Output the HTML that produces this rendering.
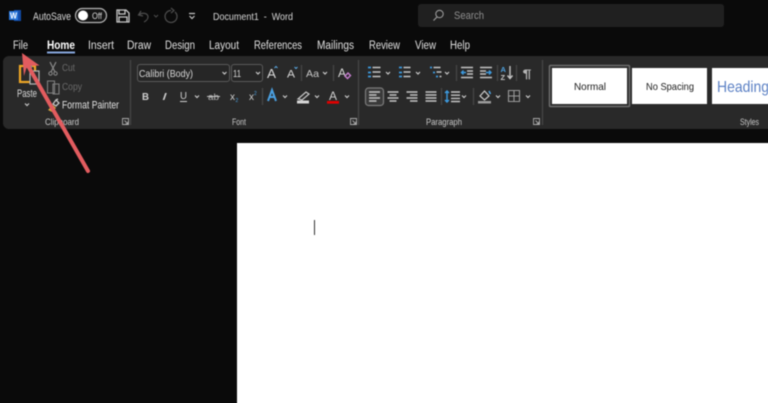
<!DOCTYPE html>
<html><head><meta charset="utf-8"><style>
html,body{margin:0;padding:0;background:#0a0a0a;width:768px;height:403px;overflow:hidden;position:relative}
svg{display:block;position:absolute;left:-8px;top:-8px;filter:blur(.5px)}
text{font-family:"Liberation Sans",sans-serif;font-size:11px;fill:#d8d8d8}
.c{fill:none;stroke:#c8c8c8;stroke-width:1.2}
.l{fill:none;stroke:#c4c4c4;stroke-width:1.4}
.b{fill:none;stroke:#3d9be0;stroke-width:1.8}
.s{stroke:#474747;stroke-width:1.2}
.t{font-size:11.5px;fill:#e0e0e0}
.g{font-size:9.5px;fill:#c8c8c8}
</style></head><body>
<svg width="784" height="419" viewBox="-8 -8 784 419" xmlns="http://www.w3.org/2000/svg">
<rect x="-8" y="-8" width="784" height="419" fill="#0a0a0a"/>
<!-- title bar -->
<rect x="14" y="10" width="7" height="11" fill="#124ba8"/>
<rect x="9" y="11" width="9" height="9" fill="#2a78dc"/>
<text x="10" y="18.500" textLength="7" lengthAdjust="spacingAndGlyphs" style="font-size:8px;font-weight:bold;fill:#fff">W</text>
<text x="33" y="20" textLength="38" lengthAdjust="spacingAndGlyphs">AutoSave</text>
<rect x="75.500" y="8.500" width="31" height="14" rx="7" fill="#141414" stroke="#b5b5b5" stroke-width="1.200"/>
<circle cx="83" cy="15.500" r="5" fill="#fff"/>
<text x="92" y="19" textLength="10" lengthAdjust="spacingAndGlyphs" style="font-size:9.500px">Off</text>
<path d="M117 10h9l3 3v9h-12zM119 10v4h6v-4M119 22v-5h8v5" fill="none" stroke="#c8c8c8" stroke-width="1.300"/>
<path d="M141 11l-2.500 4 4.500 1M139 15c3-3 9-2 9 2 0 2-2 4-4 5" fill="none" stroke="#4d4d4d" stroke-width="1.200"/>
<path d="M154 15l2 2 2-2" fill="none" stroke="#4d4d4d"/>
<path d="M175 12a6 6 0 1 1-4-1.500M171 8l3 2.500-3 2.500" fill="none" stroke="#4d4d4d" stroke-width="1.200"/>
<path d="M189 13.500h6M189.500 16l2.500 2.500 2.500-2.500" fill="none" stroke="#c2c2c2" stroke-width="1.200"/>
<text x="213" y="20" textLength="80" lengthAdjust="spacingAndGlyphs" xml:space="preserve" style="font-size:10.500px">Document1  -  Word</text>
<rect x="418" y="4" width="306" height="23" rx="3" fill="#202020"/>
<circle cx="439.500" cy="14" r="3.700" fill="none" stroke="#9a9a9a" stroke-width="1.100"/>
<path d="M437 17l-3.500 3.500" stroke="#9a9a9a" stroke-width="1.200"/>
<text x="454" y="19" textLength="30" lengthAdjust="spacingAndGlyphs" style="fill:#8f8f8f;font-size:11px">Search</text>
<!-- tabs -->
<text class="t" x="13" y="49" textLength="15" lengthAdjust="spacingAndGlyphs">File</text>
<text class="t" x="47" y="49" textLength="28" lengthAdjust="spacingAndGlyphs" style="fill:#fff;font-weight:bold">Home</text>
<rect x="47" y="51.500" width="28" height="2" fill="#86a6dc"/>
<text class="t" x="88" y="49" textLength="26" lengthAdjust="spacingAndGlyphs">Insert</text>
<text class="t" x="127" y="49" textLength="24" lengthAdjust="spacingAndGlyphs">Draw</text>
<text class="t" x="165" y="49" textLength="30" lengthAdjust="spacingAndGlyphs">Design</text>
<text class="t" x="209" y="49" textLength="30" lengthAdjust="spacingAndGlyphs">Layout</text>
<text class="t" x="254" y="49" textLength="48" lengthAdjust="spacingAndGlyphs">References</text>
<text class="t" x="317" y="49" textLength="37" lengthAdjust="spacingAndGlyphs">Mailings</text>
<text class="t" x="369" y="49" textLength="31" lengthAdjust="spacingAndGlyphs">Review</text>
<text class="t" x="415" y="49" textLength="21" lengthAdjust="spacingAndGlyphs">View</text>
<text class="t" x="450" y="49" textLength="20" lengthAdjust="spacingAndGlyphs">Help</text>
<!-- ribbon -->
<rect x="3" y="56" width="790" height="73" rx="6" fill="#292929"/>
<path d="M130.500 60v65M358.500 60v65M542.500 60v65" class="s"/>
<!-- clipboard -->
<rect x="20" y="66" width="15" height="16" fill="none" stroke="#eda626" stroke-width="2.200"/>
<rect x="25" y="64" width="7" height="4" fill="#8d8d8d"/>
<path d="M30 71h9v13h-9z" fill="#2a2a2a" stroke="#b5b5b5" stroke-width="1.200"/>
<text x="17" y="97" textLength="20" lengthAdjust="spacingAndGlyphs" style="font-size:11px">Paste</text>
<path d="M25 103.500l2 2 2-2" class="c"/>
<path d="M50 62l5 10M56 62l-5 10" fill="none" stroke="#8a8a8a" stroke-width="1.200"/>
<circle cx="50.500" cy="73.500" r="1.700" fill="none" stroke="#8a8a8a"/><circle cx="55.500" cy="73.500" r="1.700" fill="none" stroke="#8a8a8a"/>
<text x="62" y="71" textLength="13" lengthAdjust="spacingAndGlyphs" style="fill:#6a6a6a;font-size:10.500px">Cut</text>
<path d="M47.500 81h7v12h-7zM53 84h6v10h-6z" fill="#2a2a2a" stroke="#7f7f7f" stroke-width="1.100"/>
<text x="62" y="90" textLength="20" lengthAdjust="spacingAndGlyphs" style="fill:#6a6a6a;font-size:10.500px">Copy</text>
<path d="M48 110l5-5 3 3-4 4z" fill="#d9a53a"/><path d="M53 104l3-4 3 3-3 3zM56 100l2-1" fill="none" stroke="#c4c4c4" stroke-width="1.300"/>
<text x="62" y="108.500" textLength="57" lengthAdjust="spacingAndGlyphs" style="fill:#e0e0e0;font-size:11px">Format Painter</text>
<text class="g" x="45" y="125" textLength="34" lengthAdjust="spacingAndGlyphs">Clipboard</text>
<path d="M122.500 118.500h6v6h-6zM124.500 120.500l3.500 3.500M128 121.500v2.500h-2.500" fill="none" stroke="#a8a8a8" stroke-width=".9"/>
<!-- font -->
<rect x="137.500" y="64.500" width="92" height="17" rx="2.500" fill="#262626" stroke="#5a5a5a"/>
<rect x="231.500" y="64.500" width="31" height="17" rx="2.500" fill="#262626" stroke="#5a5a5a"/>
<text x="139" y="77" textLength="54" lengthAdjust="spacingAndGlyphs" style="font-size:10.500px">Calibri (Body)</text>
<text x="233" y="77" textLength="8" lengthAdjust="spacingAndGlyphs" style="font-size:10.500px">11</text>
<path d="M222.500 72l2 2 2-2M256 72l2 2 2-2M323 72l2 2 2-2" class="c"/>
<text x="267" y="78" textLength="9" lengthAdjust="spacingAndGlyphs" style="font-size:13px">A</text>
<path d="M274.500 68l1.500-1.500 1.500 1.500M294.500 67l1.500 1.500 1.500-1.500" fill="none" stroke="#5aa7e0"/>
<text x="287" y="77.500" textLength="8" lengthAdjust="spacingAndGlyphs" style="font-size:11px">A</text>
<path d="M301.500 65v16" class="s"/>
<text x="306" y="77" textLength="13" lengthAdjust="spacingAndGlyphs" style="font-size:10.500px;fill:#c8c8c8">Aa</text>
<path d="M333.500 65v16" class="s"/>
<text x="338" y="77" textLength="8" lengthAdjust="spacingAndGlyphs" style="font-size:12px">A</text>
<path d="M345 76l3-3 2.500 2.500-3 3z" fill="none" stroke="#c77fd0" stroke-width="1.400"/>
<text x="142" y="100" textLength="7" lengthAdjust="spacingAndGlyphs" style="font-weight:bold;font-size:10.500px;fill:#cfcfcf">B</text>
<text x="162" y="100" textLength="5" lengthAdjust="spacingAndGlyphs" style="font-style:italic;font-size:10.500px;fill:#cfcfcf">I</text>
<text x="180" y="99" textLength="7" lengthAdjust="spacingAndGlyphs" style="font-size:10.500px;fill:#cfcfcf">U</text>
<path d="M180 101.500h7" stroke="#cfcfcf"/>
<path d="M195 95.500l2 2 2-2M283 95.500l2 2 2-2M315 95.500l2 2 2-2M345 95.500l2 2 2-2" class="c"/>
<text x="208" y="100" textLength="11" lengthAdjust="spacingAndGlyphs" style="font-size:9px;fill:#b5b5b5">ab</text>
<path d="M207 96.500h13" stroke="#c4c4c4"/>
<text x="230" y="100" textLength="5" lengthAdjust="spacingAndGlyphs" style="font-size:10.500px;fill:#cfcfcf">x</text>
<text x="235.500" y="102" style="font-size:5px;fill:#4fa2e0">2</text>
<text x="249" y="100" textLength="5" lengthAdjust="spacingAndGlyphs" style="font-size:10.500px;fill:#cfcfcf">x</text>
<text x="254" y="95" style="font-size:5px;fill:#4fa2e0">2</text>
<path d="M262.500 88v17" class="s"/>
<path d="M268 101l4-11 4 11M270 97h4" fill="none" stroke="#4a9fe0" stroke-width="2"/>
<path d="M298 99l8-7 3 2-7 6z" fill="none" stroke="#c8c8c8" stroke-width="1.200"/>
<rect x="297" y="100.500" width="12" height="3" fill="#d5d5d5"/>
<text x="329" y="100" textLength="8" lengthAdjust="spacingAndGlyphs" style="font-size:11.500px;fill:#cfcfcf">A</text>
<rect x="327" y="101" width="12" height="2.700" fill="#e00000"/>
<text class="g" x="232" y="125" textLength="14" lengthAdjust="spacingAndGlyphs">Font</text>
<path d="M350.500 118.500h6v6h-6zM352.500 120.500l3.500 3.500M356 121.500v2.500h-2.500" fill="none" stroke="#a8a8a8" stroke-width=".9"/>
<!-- paragraph row 1 -->
<path d="M368 67.500h3M368 72.500h3M368 76.500h3" class="b"/>
<path d="M372.500 67.500h8M372.500 72h8M372.500 76.500h8" class="l"/>
<path d="M386 72l2 2 2-2M416 72l2 2 2-2M445 72l2 2 2-2" class="c"/>
<path d="M399 67.500h3M399 72.500h3M399 76.500h3" class="b"/>
<path d="M403.500 67.500h7M403.500 72h7M403.500 76.500h7" class="l"/>
<path d="M430 67.500h2M433 72.500h2M436 76.500h2" class="b"/>
<path d="M433.500 67.500h7M436.500 72h5M439.500 76.500h2" class="l"/>
<path d="M456.500 65v16M497.500 65v16M516.500 65v16" class="s"/>
<path d="M461 67.500h12M467 71h6M467 74h6M461 77.500h12M480 67.500h12M480 71h6M480 74h6M480 77.500h12" class="l"/>
<path d="M466 72.500h-4.500M463.500 70.500l-2 2 2 2M486 72.500h5M489 70.500l2 2-2 2" fill="none" stroke="#3d9be0" stroke-width="1.400"/>
<text x="500.500" y="72" style="font-size:7.500px;font-weight:bold;fill:#4fa2e0">A</text>
<text x="500.500" y="80" style="font-size:7.500px;font-weight:bold;fill:#c8c8c8">Z</text>
<path d="M510 66v12M507.500 75.500l2.500 3 2.500-3" class="l"/>
<text x="522.500" y="78" textLength="9" lengthAdjust="spacingAndGlyphs" style="font-size:12px;font-weight:bold;fill:#b5b5b5">¶</text>
<!-- paragraph row 2 -->
<rect x="365.500" y="88" width="18" height="17.500" rx="3" fill="#3a3a3a" stroke="#7c7c7c" stroke-width="1.200"/>
<path d="M369 92h11M369 95h7.500M369 98h11M369 101h7.500M387.500 92h11M389.500 95h7M387.500 98h11M389.500 101h7M406.500 92h11M410 95h7.500M406.500 98h11M410 101h7.500M425.500 92h11M425.500 95h11M425.500 98h11M425.500 101h11" class="l"/>
<path d="M441.500 88v17M473.500 88v17" class="s"/>
<path d="M447 91v11M445 93l2-2 2 2M445 100l2 2 2-2" fill="none" stroke="#3d9be0" stroke-width="1.400"/>
<path d="M451 92h9M451 95.200h9M451 98.400h9M451 101.500h9" class="l"/>
<path d="M462 95.500l2 2 2-2M496 95.500l2 2 2-2M526 95.500l2 2 2-2" class="c"/>
<path d="M480 96l4.500-5 4.500 5-4.500 4z" fill="none" stroke="#cdcdcd" stroke-width="1.200"/>
<path d="M489 91l1.500 3" stroke="#4fa2e0" stroke-width="1.500"/>
<rect x="478" y="101" width="13" height="2.500" fill="#9b9b9b"/>
<path d="M508.500 90.500h11v11h-11zM514 90.500v11M508.500 96h11" fill="none" stroke="#9a9a9a" stroke-width="1.100"/>
<text class="g" x="426" y="125" textLength="36" lengthAdjust="spacingAndGlyphs">Paragraph</text>
<path d="M533.500 118.500h6v6h-6zM535.500 120.500l3.500 3.500M539 121.500v2.500h-2.500" fill="none" stroke="#a8a8a8" stroke-width=".9"/>
<!-- styles -->
<rect x="549.500" y="65.500" width="80" height="41" rx="1" fill="#2a2a2a" stroke="#6d6d6d" stroke-width="1.500"/>
<rect x="552" y="68" width="75" height="36" fill="#fff"/>
<rect x="632" y="68" width="75" height="36" fill="#fff"/>
<rect x="712" y="68" width="70" height="36" fill="#fff"/>
<text x="574" y="90" textLength="32" lengthAdjust="spacingAndGlyphs" style="font-size:10.500px;fill:#1a1a1a">Normal</text>
<text x="646" y="90" textLength="48" lengthAdjust="spacingAndGlyphs" style="font-size:10.500px;fill:#1a1a1a">No Spacing</text>
<text x="717" y="92" textLength="52" lengthAdjust="spacingAndGlyphs" style="font-size:16px;fill:#5b80c4">Heading</text>
<text class="g" x="740" y="125" textLength="19" lengthAdjust="spacingAndGlyphs">Styles</text>
<!-- document -->
<rect x="237" y="143" width="545" height="272" fill="#fff"/>
<rect x="314" y="220" width="1" height="15" fill="#333"/>
<!-- arrow -->
<path d="M88 171L27 64" stroke="#e25c5f" stroke-width="4" stroke-linecap="round" fill="none"/>
<path d="M22 53L39.500 65.500 27 66 24 76z" fill="#e25c5f"/>
</svg>
</body></html>
